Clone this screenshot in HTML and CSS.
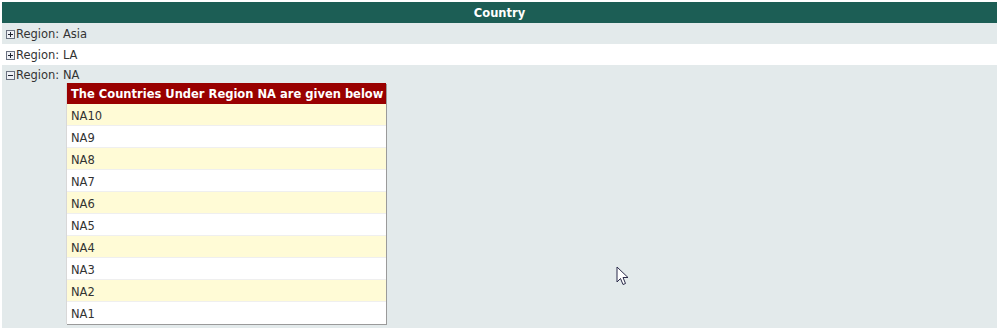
FILE: index.html
```html
<!DOCTYPE html>
<html lang="en">
<head>
    <meta charset="UTF-8">
    <title>Country</title>
    <link rel="stylesheet" href="styles.css">
</head>
<body>
    <div class="grid">
        <div class="grid-head">Country</div>

        <div class="group alt">
            <span class="toggle plus"></span>Region: Asia
        </div>
        <div class="group">
            <span class="toggle plus"></span>Region: LA
        </div>
        <div class="group alt open">
            <div class="group-title"><span class="toggle minus"></span>Region: NA</div>
            <div class="sub">
                <div class="sub-head">The Countries Under Region NA are given below</div>
                <div class="sub-row odd">NA10</div>
                <div class="sub-row">NA9</div>
                <div class="sub-row odd">NA8</div>
                <div class="sub-row">NA7</div>
                <div class="sub-row odd">NA6</div>
                <div class="sub-row">NA5</div>
                <div class="sub-row odd">NA4</div>
                <div class="sub-row">NA3</div>
                <div class="sub-row odd">NA2</div>
                <div class="sub-row">NA1</div>
            </div>
        </div>
    </div>

    <svg class="cursor" width="13" height="21" viewBox="0 0 13 21">
        <path d="M1 1 L1 16 L4.5 12.5 L7 18.5 L9.5 17.5 L7 11.5 L12 11.5 Z" fill="#fff" stroke="#2b2b4a" stroke-width="1" stroke-linejoin="round"/>
    </svg>
</body>
</html>
```

FILE: styles.css
```css
body { margin: 0; padding: 2px; font-family: "DejaVu Sans", Verdana, sans-serif; font-size: 11.5px; color: #333; background: #fff; }
.grid { width: 995px; }
.grid-head { height: 21px; line-height: 22px; background: #1c5e55; color: #fff; font-weight: bold; text-align: center; }
.group { height: 21px; line-height: 23px; padding-left: 4px; background: #fff; }
.group.alt { background: #e3eaeb; }
.group.open { height: auto; padding-bottom: 4px; }
.group-title { height: 18px; line-height: 21px; }
.toggle { display: inline-block; width: 7px; height: 7px; border: 1px solid #6a7180; background: #eef0f5; vertical-align: -1px; margin-right: 1px; position: relative; }
.toggle::before { content: ""; position: absolute; left: 1px; top: 3px; width: 5px; height: 1px; background: #1e2230; }
.toggle.plus::after { content: ""; position: absolute; left: 3px; top: 1px; width: 1px; height: 5px; background: #1e2230; }
.sub { width: 319px; margin-left: 60px; border-left: 1px solid #d8d8d8; box-shadow: 1px 1px 0 #9a9a9a; background: #fff; }
.sub-head { height: 21px; line-height: 22px; background: #990000; color: #fff; font-weight: bold; padding-left: 4px; white-space: nowrap; }
.sub-row { height: 21px; line-height: 24px; padding-left: 4px; border-bottom: 1px solid #efefef; background: #fff; }
.sub-row.odd { background: #fffbd6; }
.sub-row:last-child { border-bottom: none; height: 22px; }
.cursor { position: absolute; left: 616px; top: 266px; }
```
